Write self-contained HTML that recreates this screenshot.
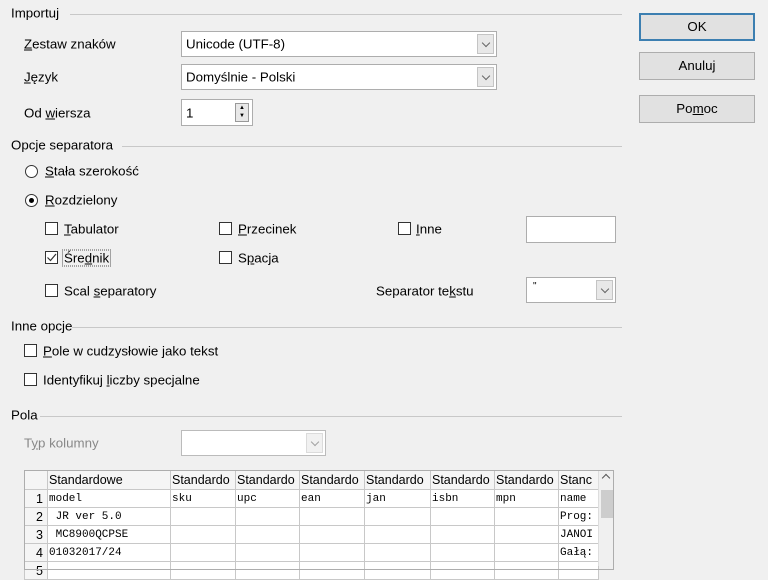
<!DOCTYPE html>
<html><head><meta charset="utf-8"><style>
body{margin:0;width:768px;height:566px;background:#f0f0f0;font-family:"Liberation Sans",sans-serif;font-size:13.3px;color:#000;position:relative;overflow:hidden}
.a{position:absolute;white-space:nowrap}
.t{transform:translateY(-50%)}
.ln{position:absolute;height:1px;background:#c8c8c8}
.box{position:absolute;background:#fff;border:1px solid #adadad;box-sizing:border-box}
.dd{position:absolute;top:2px;bottom:2px;right:2px;width:17px;background:#e8e8e8;border:1px solid #c4c4c4;box-sizing:border-box}
.dd:after{content:"";position:absolute;left:5px;top:5px;width:5px;height:5px;border-right:1px solid #666;border-bottom:1px solid #666;transform:rotate(45deg)}
.cb{position:absolute;width:13px;height:13px;border:1px solid #333;background:#fff;box-sizing:border-box}
.rb{position:absolute;width:13px;height:13px;border:1px solid #333;border-radius:50%;background:#fff;box-sizing:border-box}
.btn{position:absolute;left:639px;width:116px;height:28px;background:#e1e1e1;border:1px solid #adadad;box-sizing:border-box;text-align:center;line-height:26px}
u{text-decoration:underline}
table{position:absolute;left:24px;top:470px;border-collapse:collapse;background:#fff;font-family:"Liberation Mono",monospace;font-size:11px;table-layout:fixed}
td{border:1px solid #c8c8c8;height:18px;padding:0 1px;overflow:hidden;white-space:nowrap;box-sizing:border-box}
tr.h td{font-family:"Liberation Sans",sans-serif;font-size:12.5px;background:#f5f5f5;height:19px}
td.n{background:#f5f5f5;text-align:right;font-family:"Liberation Sans",sans-serif;font-size:12.5px;padding-right:4px}
</style></head><body>
<div class="a t" style="left:11px;top:13px">Importuj</div><div class="ln" style="left:70px;top:14px;width:552px"></div>
<div class="a t" style="left:24px;top:44px"><u>Z</u>estaw znaków</div>
<div class="box" style="left:181px;top:31px;width:316px;height:26px"><span class="a t" style="left:4px;top:12px">Unicode (UTF-8)</span><div class="dd"></div></div>
<div class="a t" style="left:24px;top:77px"><u>J</u>ęzyk</div>
<div class="box" style="left:181px;top:64px;width:316px;height:26px"><span class="a t" style="left:4px;top:12px">Domyślnie - Polski</span><div class="dd"></div></div>
<div class="a t" style="left:24px;top:113px">Od <u>w</u>iersza</div>
<div class="box" style="left:181px;top:99px;width:72px;height:27px"><span class="a t" style="left:4px;top:13px">1</span>
<div style="position:absolute;right:3px;top:3px;width:14px;height:19px;background:#e8e8e8;border:1px solid #999;box-sizing:border-box;font-size:6px;line-height:8px;text-align:center">▲<br>▼</div></div>
<div class="a t" style="left:11px;top:145px">Opcje separatora</div><div class="ln" style="left:122px;top:146px;width:500px"></div>
<div class="rb" style="left:25px;top:165px"></div><div class="a t" style="left:45px;top:171px"><u>S</u>tała szerokość</div>
<div class="rb" style="left:25px;top:194px"><div style="position:absolute;left:3px;top:3px;width:5px;height:5px;border-radius:50%;background:#000"></div></div><div class="a t" style="left:45px;top:200px"><u>R</u>ozdzielony</div>
<div class="cb" style="left:45px;top:222px"></div><div class="a t" style="left:64px;top:229px"><u>T</u>abulator</div>
<div class="cb" style="left:219px;top:222px"></div><div class="a t" style="left:238px;top:229px"><u>P</u>rzecinek</div>
<div class="cb" style="left:398px;top:222px"></div><div class="a t" style="left:416px;top:229px"><u>I</u>nne</div>
<div class="box" style="left:526px;top:216px;width:90px;height:27px"></div>
<div class="cb" style="left:45px;top:251px"><svg width="11" height="11" style="position:absolute;left:0;top:0"><path d="M1.5 5.5 L4.5 8.5 L10 2" stroke="#333" fill="none" stroke-width="1.2"/></svg></div><div class="a t" style="left:62px;top:258px;border:1px dotted #555;padding:0 1px">Śre<u>d</u>nik</div>
<div class="cb" style="left:219px;top:251px"></div><div class="a t" style="left:238px;top:258px">S<u>p</u>acja</div>
<div class="cb" style="left:45px;top:284px"></div><div class="a t" style="left:64px;top:291px">Scal <u>s</u>eparatory</div>
<div class="a t" style="left:376px;top:291px">Separator te<u>k</u>stu</div>
<div class="box" style="left:526px;top:277px;width:90px;height:26px"><span class="a" style="left:6px;top:3px;font-size:10px">"</span><div class="dd"></div></div>
<div class="a t" style="left:11px;top:326px">Inne opcje</div><div class="ln" style="left:72px;top:327px;width:550px"></div>
<div class="cb" style="left:24px;top:344px"></div><div class="a t" style="left:43px;top:351px"><u>P</u>ole w cudzysłowie jako tekst</div>
<div class="cb" style="left:24px;top:373px"></div><div class="a t" style="left:43px;top:380px">Identyfikuj <u>l</u>iczby specjalne</div>
<div class="a t" style="left:11px;top:415px">Pola</div><div class="ln" style="left:40px;top:416px;width:582px"></div>
<div class="a t" style="left:24px;top:443px;color:#888">T<u>y</u>p kolumny</div>
<div class="box" style="left:181px;top:430px;width:145px;height:26px;border-color:#bbb"><div class="dd" style="opacity:.6"></div></div>
<table>
<colgroup><col style="width:23px"><col style="width:123px"><col style="width:65px"><col style="width:64px"><col style="width:65px"><col style="width:66px"><col style="width:64px"><col style="width:64px"><col style="width:40px"></colgroup>
<tr class="h"><td></td><td>Standardowe</td><td>Standardo</td><td>Standardo</td><td>Standardo</td><td>Standardo</td><td>Standardo</td><td>Standardo</td><td>Stanc</td></tr>
<tr><td class="n">1</td><td>model</td><td>sku</td><td>upc</td><td>ean</td><td>jan</td><td>isbn</td><td>mpn</td><td>name</td></tr>
<tr><td class="n">2</td><td>&nbsp;JR ver 5.0</td><td></td><td></td><td></td><td></td><td></td><td></td><td>Prog:</td></tr>
<tr><td class="n">3</td><td>&nbsp;MC8900QCPSE</td><td></td><td></td><td></td><td></td><td></td><td></td><td>JANOI</td></tr>
<tr><td class="n">4</td><td>01032017/24</td><td></td><td></td><td></td><td></td><td></td><td></td><td>Gałą:</td></tr>
<tr><td class="n">5</td><td></td><td></td><td></td><td></td><td></td><td></td><td></td><td></td></tr>
</table>
<div style="position:absolute;left:598px;top:470px;width:16px;height:96px;background:#f0f0f0;border-left:1px solid #ddd"><div style="position:absolute;left:4px;top:5px;width:5px;height:5px;border-left:1px solid #555;border-top:1px solid #555;transform:rotate(45deg)"></div><div style="position:absolute;left:2px;top:20px;width:12px;height:28px;background:#cdcdcd"></div></div>
<div style="position:absolute;left:24px;top:470px;width:590px;height:100px;border:1px solid #adadad;box-sizing:border-box"></div>
<div class="btn" style="top:13px;border:2px solid #3c7fb1;line-height:24px">OK</div>
<div class="btn" style="top:52px">Anuluj</div>
<div class="btn" style="top:95px">Po<u>m</u>oc</div>
</body></html>
